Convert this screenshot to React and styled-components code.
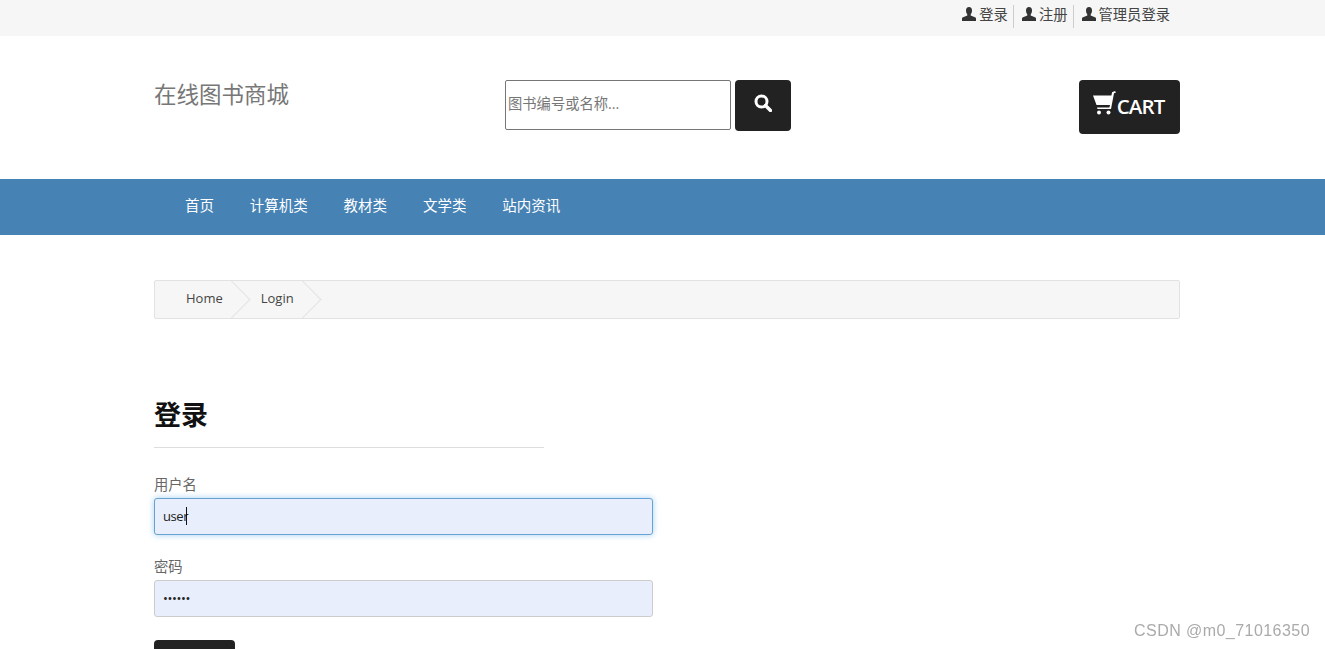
import styled, { createGlobalStyle } from "styled-components";

const GlobalStyle = createGlobalStyle`
  html, body {
    margin: 0;
    height: 649px;
    overflow: hidden;
    background: #fff;
    font-family: "Open Sans", "Noto Sans CJK SC", sans-serif;
    font-size: 14px;
    color: #333;
  }
  * { box-sizing: border-box; }
`;

const Container = styled.div`
  width: 1026px;
  margin-left: 154px;
`;

const TopBar = styled.div`
  height: 36px;
  background: #f6f6f6;
`;

const TopLinks = styled(Container)`
  display: flex;
  justify-content: flex-end;
  align-items: center;
  height: 33px;
  padding-right: 10px;
`;

const TopLink = styled.a`
  display: flex;
  align-items: center;
  gap: 3px;
  height: 23px;
  padding: 0 5px 6px 8px;
  font-size: 14.300px;
  color: #444;
  border-right: 1px solid #ccc;
  &:last-child { padding-right: 0; border-right: 0; }
`;

const Header = styled(Container)`
  display: flex;
  align-items: flex-start;
  height: 143px;
  padding-top: 44px;
`;

const Logo = styled.a`
  width: 351px;
  font-size: 22.500px;
  line-height: 29px;
  color: #777;
`;

const SearchForm = styled.form`
  display: flex;
  gap: 4px;
`;

const SearchInput = styled.input`
  width: 226px;
  height: 50px;
  padding: 0 2px 4px;
  border: 1px solid #767676;
  border-radius: 2px;
  font: 14.300px "Open Sans", "Noto Sans CJK SC", sans-serif;
  outline: none;
  &::placeholder { color: #777; }
`;

const DarkButton = styled.button`
  display: flex;
  align-items: center;
  justify-content: center;
  border: 0;
  border-radius: 4px;
  background: #222;
  color: #fff;
`;

const SearchButton = styled(DarkButton)`
  width: 56px;
  height: 51px;
  padding-bottom: 6px;
`;

const CartButton = styled(DarkButton)`
  margin-left: auto;
  width: 101px;
  height: 54px;
  padding: 0 2px 3px 0;
  font: 600 20.500px "Open Sans", sans-serif;
  letter-spacing: -0.900px;

  svg { margin: 0 1px 6px 0; }
`;

const NavBar = styled.nav`
  height: 56px;
  background: #4682b4;
`;

const NavList = styled(Container)`
  display: flex;
  padding-left: 13px;
`;

const NavItem = styled.a`
  padding: 0 17.800px 0 18px;
  font-size: 14.500px;
  font-weight: 400;
  line-height: 54px;
  color: #fff;
`;

const Breadcrumb = styled(Container)`
  display: flex;
  height: 39px;
  margin-top: 45px;
  border: 1px solid #e2e2e2;
  border-radius: 2px;
  background: #f6f6f6;
  overflow: hidden;
`;

const Crumb = styled.a`
  position: relative;
  padding: ${(p) => (p.$first ? "0 27px 0 31px" : "0 27px 0 11px")};
  font-size: 13px;
  line-height: 35px;
  color: #444;

  /* chevron between the crumbs */
  &::after {
    content: "";
    position: absolute;
    top: 5px;
    right: 5px;
    width: 26px;
    height: 26px;
    transform: rotate(45deg);
    border-top: 1px solid #e2e2e2;
    border-right: 1px solid #e2e2e2;
  }
`;

const Main = styled(Container)`
  padding-top: 76px;
`;

const Title = styled.h1`
  width: 390px;
  height: 53px;
  margin: 0 0 28px;
  border-bottom: 1px solid #ddd;
  font-size: 27px;
  font-weight: 700;
  line-height: 40px;
  color: #111;
`;

const Field = styled.div`
  width: 499px;
  margin-bottom: 23px;
`;

const Label = styled.label`
  display: block;
  height: 14px;
  font-size: 14.300px;
  line-height: 18px;
  color: #666;
`;

const InputWrap = styled.div`
  position: relative;
  margin-top: 8px;
`;

const TextInput = styled.input`
  display: block;
  width: 100%;
  height: 37px;
  padding: 0 8px 1px;
  border: 1px solid ${(p) => (p.$focused ? "#66a3d2" : "#ccc")};
  border-radius: 3px;
  background: #e8eefb;
  box-shadow: ${(p) => (p.$focused ? "0 0 6px rgba(102, 175, 233, 0.6)" : "none")};
  font: 13px "Open Sans", sans-serif;
  letter-spacing: -0.400px;
  color: #222;
  outline: none;
`;

// the text caret in the focused field
const Caret = styled.span`
  position: absolute;
  top: 9px;
  left: 32px;
  width: 1px;
  height: 18px;
  background: #111;
`;

const SubmitButton = styled(DarkButton)`
  width: 81px;
  height: 36px;
`;

const Watermark = styled.div`
  position: fixed;
  right: 15px;
  bottom: 9px;
  font: 16px "Liberation Sans", sans-serif;
  letter-spacing: 0.450px;
  color: #aaa;
`;

const UserIcon = () => (
  <svg width="14" height="14" viewBox="0 0 14 14" fill="#333">
    <path d="M7 0C5 0 4 1.500 4 3.500c0 1.500.5 3 1.300 3.900v1.100L.5 10.500C.2 10.700 0 11 0 11.500V14h14v-2.500c0-.5-.2-.8-.5-1L8.700 8.500V7.400C9.500 6.500 10 5 10 3.500 10 1.500 9 0 7 0z" />
  </svg>
);

const SearchIcon = () => (
  <svg width="18" height="18" viewBox="0 0 18 18" fill="none" stroke="#fff">
    <circle cx="7.500" cy="7.500" r="5.500" strokeWidth="3" />
    <path d="M11.500 11.500L16.500 16.500" strokeWidth="3.400" strokeLinecap="round" />
  </svg>
);

const CartIcon = () => (
  <svg width="23" height="24" viewBox="0 0 23 24" fill="#fff">
    <path d="M22 0l1 1.500-2 .8L18 18H4.500L4 16.500h12.400l.6-2.500H3.500L0 4.500h18.400l.7-3.300z" />
    <circle cx="6" cy="21.500" r="2" />
    <circle cx="15.500" cy="21.500" r="2" />
  </svg>
);

const topLinks = ["登录", "注册", "管理员登录"];
const navItems = ["首页", "计算机类", "教材类", "文学类", "站内资讯"];

const App = () => (
  <>
    <GlobalStyle />
    <TopBar>
      <TopLinks>
        {topLinks.map((label) => (
          <TopLink key={label}>
            <UserIcon />
            {label}
          </TopLink>
        ))}
      </TopLinks>
    </TopBar>
    <Header>
      <Logo>在线图书商城</Logo>
      <SearchForm>
        <SearchInput placeholder="图书编号或名称..." />
        <SearchButton type="button">
          <SearchIcon />
        </SearchButton>
      </SearchForm>
      <CartButton type="button">
        <CartIcon />
        CART
      </CartButton>
    </Header>
    <NavBar>
      <NavList>
        {navItems.map((label) => (
          <NavItem key={label}>{label}</NavItem>
        ))}
      </NavList>
    </NavBar>
    <Breadcrumb>
      <Crumb $first>Home</Crumb>
      <Crumb>Login</Crumb>
    </Breadcrumb>
    <Main>
      <Title>登录</Title>
      <Field>
        <Label>用户名</Label>
        <InputWrap>
          <TextInput $focused defaultValue="user" />
          <Caret />
        </InputWrap>
      </Field>
      <Field>
        <Label>密码</Label>
        <InputWrap>
          <TextInput type="password" defaultValue="123456" />
        </InputWrap>
      </Field>
      <SubmitButton type="button" />
    </Main>
    <Watermark>CSDN @m0_71016350</Watermark>
  </>
);

export default App;
